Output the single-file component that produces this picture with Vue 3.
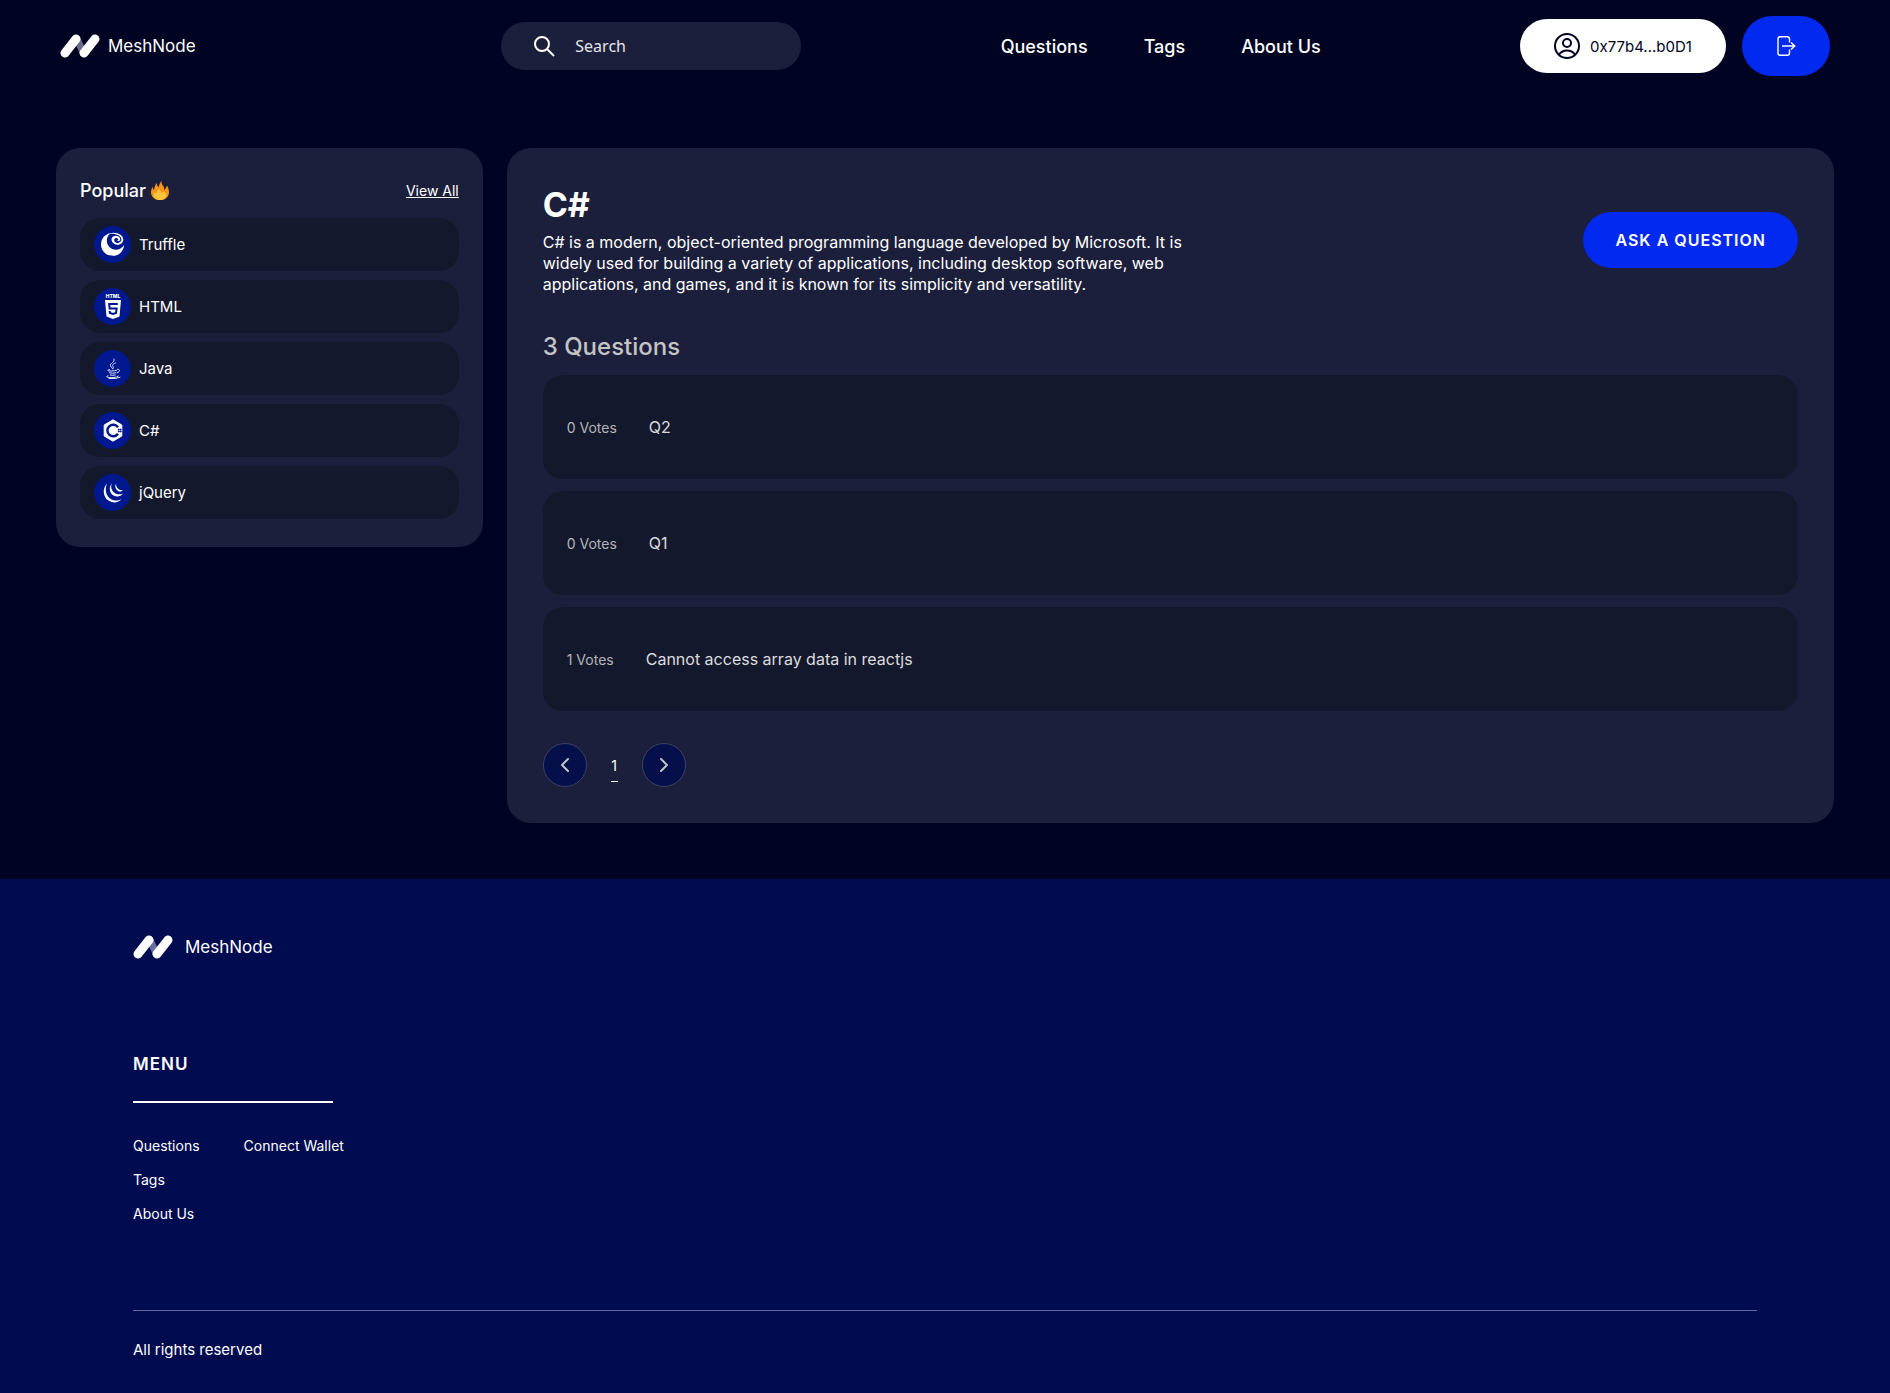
<script setup>
import { ref } from 'vue'

const search = ref('')
const page = ref(1)

const navLinks = ['Questions', 'Tags', 'About Us']
const footerLinks = [
  ['Questions', 'Tags', 'About Us'],
  ['Connect Wallet'],
]

const tags = ref([
  { name: 'Truffle', icon: 'truffle' },
  { name: 'HTML', icon: 'html' },
  { name: 'Java', icon: 'java' },
  { name: 'C#', icon: 'csharp' },
  { name: 'jQuery', icon: 'jquery' },
])

const questions = ref([
  { title: 'Q2', votes: 0 },
  { title: 'Q1', votes: 0 },
  { title: 'Cannot access array data in reactjs', votes: 1 },
])
</script>

<template>
  <div class="page">
    <header class="header">
      <a class="logo" href="#">
        <svg width="40" height="24" viewBox="0 0 40 24" fill="none" stroke-linecap="round">
          <path d="M17 5L23 18" stroke="#6a6b86" stroke-width="7" />
          <path d="M5 19L16 5M24 19L35 5" stroke="#fff" stroke-width="9" />
        </svg>
        <span>MeshNode</span>
      </a>

      <form class="search" role="search" @submit.prevent>
        <svg width="22" height="22" viewBox="0 0 22 22" fill="none" stroke="#fff" stroke-width="2">
          <circle cx="9" cy="9" r="7" />
          <path d="M14 14L21 21" />
        </svg>
        <input v-model="search" type="search" placeholder="Search" aria-label="Search" />
      </form>

      <nav class="nav">
        <a v-for="link in navLinks" :key="link" href="#">{{ link }}</a>
      </nav>

      <div class="account">
        <button class="wallet" type="button">
          <svg width="26" height="26" viewBox="0 0 26 26" fill="none" stroke="#000422" stroke-width="2">
            <circle cx="13" cy="13" r="12" />
            <circle cx="13" cy="10" r="4" />
            <path d="M5 21.500C7 18.800 10 17.500 13 17.500S19 18.800 21 21.500" />
          </svg>
          <span>0x77b4...b0D1</span>
        </button>
        <button class="logout" type="button" aria-label="Log out">
          <svg width="20" height="20" viewBox="0 0 20 20" fill="none" stroke="#fff" stroke-width="1.400">
            <path d="M13.500 6.500V3Q13.500 .8 11.300 .8H4.200Q2 .8 2 3V17Q2 19.200 4.200 19.200H11.300Q13.500 19.200 13.500 17V13.500" />
            <path d="M6 10H18.500M15 6.500L18.800 10L15 13.500" />
          </svg>
        </button>
      </div>
    </header>

    <main class="main">
      <aside class="sidebar">
        <div class="sidebar-head">
          <h2>
            Popular
            <svg width="18" height="19" viewBox="0 0 18 19">
              <path fill="#f7941d" d="M9 19C3.500 19 0 15.500 0 11.500C0 9 .8 7 1.600 5.500C1.700 7 2 8 3 9C3.300 6.500 4 3.500 6 2C5.900 4 6.300 5 7.500 6C8.300 4.500 8.500 2 10.500 0C10.300 2.500 11 4 12.500 5.300C13.300 6.500 13.200 8 13.300 9C14.500 8.200 15.200 6.500 16 4.500C17.400 7 18 9.200 18 11.500C18 15.500 14.500 19 9 19Z" />
              <path fill="#fcc53b" d="M9 19C5 19 2.600 17 2.600 14.500C2.600 13 3.200 12 4 11C4.300 12 4.700 12.400 5.500 12.700C6 10 7 8.500 8.500 7.500C8.700 9.500 10 10.500 11 12C12 11.800 12.500 11 13 10C14.500 11.500 15.400 13 15.400 14.500C15.400 17 13 19 9 19Z" />
            </svg>
          </h2>
          <a href="#">View All</a>
        </div>

        <a v-for="tag in tags" :key="tag.name" class="tag" href="#">
          <span class="tag-icon">
            <svg v-if="tag.icon === 'truffle'" width="25" height="25" viewBox="0 0 25 25">
              <circle cx="12.500" cy="12.500" r="11.500" fill="#fff" />
              <path fill="#00188f" d="M9 2.500C6 6 6 12 10 15.500C14.500 19.500 21 18 24.500 12.500L25 5L20 0L13 .5Z" />
              <path fill="#fff" d="M9.500 1.200C17 -.8 23.500 3 23.300 8C23 12 18.500 13.800 15 12.300C11 10.600 10.300 6 13.500 4.200C16.500 2.700 20.500 4.500 20.200 7.500C20 9.300 17.800 9.500 16.700 8.500C18 8.400 18.500 7.500 17.900 6.700C17 5.500 14.500 6 14.200 7.700C13.900 9.700 16 11.300 18.200 10.900C20.800 10.400 22 8 21 5.800C19.300 2.500 14 1.500 9.500 1.200Z" />
              <path d="M3 20Q7 24.500 13 24" stroke="#00188f" stroke-width=".6" fill="none" />
            </svg>
            <svg v-else-if="tag.icon === 'html'" width="18" height="25" viewBox="0 0 18 25">
              <text x="9" y="4" class="html-word" text-anchor="middle">HTML</text>
              <path fill="#fff" d="M1 6H17L15.500 22.500L9 25L2.500 22.500Z" />
              <path d="M13.800 10H5.200L5.600 14.400H12.600L12.100 18.900L9 20L5.900 18.900L5.700 17" fill="none" stroke="#00188f" stroke-width="2" />
            </svg>
            <svg v-else-if="tag.icon === 'java'" width="16" height="21" viewBox="0 0 16 21" fill="none" stroke="#dfe3ff" stroke-width="1" stroke-linecap="round">
              <path d="M9 1C10.500 4 5 5 5.500 7.500C5.700 8.800 7 9.600 7.500 10.500M10.500 5C7 6.500 7 7.500 8.200 8.800C8.700 9.500 8.300 10.300 7.700 11" />
              <path d="M4.500 11.500C1 12.500 3 13 6.500 13Q9 13 11.500 12.400M4.500 14.800Q7.500 15.800 11 14.800M5.200 17Q7.500 17.800 10.300 17M12.500 11.300C15.500 11 15 14 12.300 14.800" />
              <path d="M3 17.800C-.5 18.800 2.500 19.600 7 19.600Q12 19.600 13.300 18.200M4 20.500Q11 21.200 15 19.300" />
            </svg>
            <svg v-else-if="tag.icon === 'csharp'" width="20" height="23" viewBox="0 0 20 23">
              <path fill="#fff" stroke="#fff" stroke-linejoin="round" d="M10 .8L18.800 6V17L10 22.200L1.200 17V6Z" />
              <path d="M15 8.200A5.800 5.800 0 1 0 15 14.800" fill="none" stroke="#00188f" stroke-width="2.400" />
              <path d="M15.800 9.500V13.500M17.700 9.500V13.500M14.800 10.600H18.700M14.800 12.500H18.700" stroke="#00188f" stroke-width=".8" />
            </svg>
            <svg v-else width="21" height="21" viewBox="-1 0 21 21" fill="#fff">
              <path d="M4 1.500C-1 7 0 15 5.500 18.500C10 21.500 15.500 21 18.500 17C13.500 20 8 18.500 5 14.500C2.200 10.800 2.200 6 4 1.500Z" />
              <path d="M8.800 1.500C5.500 5.500 6.500 11 10.500 13.500C14 15.500 18 14.500 20 11.500C16.500 13 13 12.500 10.500 10C8 7.500 7.600 4.500 8.800 1.500Z" />
              <path d="M13.200 1.500C11.500 4.500 12.500 7.500 15 9C17 10.200 18.500 9.800 20 8C18 8.600 16.500 8 14.900 6.500C13.300 5 12.800 3 13.200 1.500Z" />
            </svg>
          </span>
          {{ tag.name }}
        </a>
      </aside>

      <section class="content">
        <div class="intro">
          <div class="intro-text">
            <h1>C#</h1>
            <p>
              C# is a modern, object-oriented programming language developed by Microsoft. It is
              widely used for building a variety of applications, including desktop software, web
              applications, and games, and it is known for its simplicity and versatility.
            </p>
          </div>
          <button class="ask" type="button">ASK A QUESTION</button>
        </div>

        <h2 class="count">{{ questions.length }} Questions</h2>
        <div class="questions">
          <article v-for="question in questions" :key="question.title" class="question">
            <span class="votes">{{ question.votes }} Votes</span>
            <a href="#">{{ question.title }}</a>
          </article>
        </div>

        <nav class="pagination" aria-label="Pages">
          <button type="button" aria-label="Previous page">
            <svg width="10" height="16" viewBox="0 0 10 16"><path d="M8 2L2 8L8 14" /></svg>
          </button>
          <a href="#" aria-current="page">{{ page }}</a>
          <button type="button" aria-label="Next page">
            <svg width="10" height="16" viewBox="0 0 10 16"><path d="M2 2L8 8L2 14" /></svg>
          </button>
        </nav>
      </section>
    </main>

    <footer class="footer">
      <a class="logo footer-logo" href="#">
        <svg width="40" height="24" viewBox="0 0 40 24" fill="none" stroke-linecap="round">
          <path d="M17 5L23 18" stroke="#6a6fa0" stroke-width="7" />
          <path d="M5 19L16 5M24 19L35 5" stroke="#fff" stroke-width="9" />
        </svg>
        <span>MeshNode</span>
      </a>
      <h3>MENU</h3>
      <div class="footer-menu">
        <ul v-for="(column, index) in footerLinks" :key="index">
          <li v-for="link in column" :key="link"><a href="#">{{ link }}</a></li>
        </ul>
      </div>
      <p class="rights">All rights reserved</p>
    </footer>
  </div>
</template>

<style>
body {
  margin: 0;
  background: #000422;
}
</style>

<style scoped>
.page {
  min-height: 100vh;
  display: flex;
  flex-direction: column;
  background: #000422;
  color: #fff;
  font-family: Inter, "Liberation Sans", sans-serif;
  font-size: 16px;
}
* {
  box-sizing: border-box;
}
h1, h2, h3, p, ul {
  margin: 0;
  padding: 0;
}
a {
  color: inherit;
  text-decoration: none;
}
button {
  border: 0;
  padding: 0;
  font: inherit;
  color: inherit;
  cursor: pointer;
}
svg {
  display: block;
  flex-shrink: 0;
}

.header {
  display: flex;
  justify-content: space-between;
  align-items: center;
  padding: 16px 60px;
}
.logo {
  display: flex;
  align-items: center;
  gap: 8px;
  min-width: 242px;
  font-size: 17px;
  line-height: 24px;
}
.search {
  display: flex;
  align-items: center;
  gap: 20px;
  width: 300px;
  height: 48px;
  padding: 0 32px;
  border-radius: 24px;
  background: #1c1f3b;
}
.search input {
  width: 100%;
  border: 0;
  padding: 0;
  outline: 0;
  background: none;
  color: #fff;
  font-family: "Noto Sans", sans-serif;
  font-size: 16px;
}
.search input::placeholder {
  color: #e4e4e8;
}
.nav {
  display: flex;
  gap: 56px;
  font-size: 18px;
  font-weight: 500;
}
.account {
  display: flex;
  align-items: center;
  gap: 16px;
}
.wallet {
  display: flex;
  align-items: center;
  justify-content: center;
  gap: 10px;
  width: 206px;
  height: 54px;
  border-radius: 27px;
  background: #fff;
  color: #000422;
  font-size: 15px;
}
.logout {
  display: flex;
  align-items: center;
  justify-content: center;
  width: 88px;
  height: 60px;
  border-radius: 30px;
  background: #0229f0;
}

.main {
  display: flex;
  align-items: flex-start;
  gap: 24px;
  padding: 56px;
}
.sidebar {
  flex: 0 0 24%;
  display: flex;
  flex-direction: column;
  gap: 9px;
  padding: 24px 24px 28px;
  border-radius: 24px;
  background: #1c1f3b;
}
.sidebar-head {
  display: flex;
  align-items: center;
  justify-content: space-between;
  height: 37px;
}
.sidebar-head h2 {
  display: flex;
  align-items: center;
  gap: 5px;
  font-size: 18px;
  font-weight: 500;
}
.sidebar-head a {
  font-size: 14px;
  text-decoration: underline;
}
.tag {
  display: flex;
  align-items: center;
  gap: 8px;
  padding: 8px 14px;
  border-radius: 20px;
  background: #14182d;
  font-size: 15px;
}
.tag-icon {
  display: flex;
  align-items: center;
  justify-content: center;
  width: 37px;
  height: 37px;
  border-radius: 50%;
  background: #00188f;
}
.html-word {
  fill: #fff;
  font-size: 5px;
  font-weight: 800;
}

.content {
  flex: 1;
  min-width: 0;
  padding: 36px;
  border-radius: 24px;
  background: #1c1f3b;
}
.intro {
  display: flex;
  align-items: center;
  justify-content: space-between;
  gap: 32px;
}
.intro-text {
  max-width: 656px;
}
.intro h1 {
  font-size: 34px;
  font-weight: 700;
  line-height: 42px;
}
.intro p {
  padding-top: 6px;
  line-height: 21px;
}
.ask {
  flex-shrink: 0;
  padding: 0 32px;
  height: 56px;
  border-radius: 28px;
  background: #0229f0;
  font-weight: 600;
  letter-spacing: 1px;
}
.count {
  margin: 36px 0 12px;
  color: #c4c4c4;
  font-size: 24px;
  font-weight: 500;
  line-height: 32px;
}
.questions {
  display: flex;
  flex-direction: column;
  gap: 12px;
}
.question {
  display: flex;
  align-items: center;
  gap: 32px;
  height: 104px;
  padding: 0 24px;
  border-radius: 20px;
  background: #14182d;
  color: #dcdcde;
}
.votes {
  color: #b4b5b9;
  font-size: 14px;
}
.pagination {
  display: flex;
  align-items: center;
  gap: 24px;
  margin-top: 32px;
}
.pagination button {
  display: flex;
  align-items: center;
  justify-content: center;
  width: 44px;
  height: 44px;
  border: 1px solid #3b4166;
  border-radius: 50%;
  background: #050f4a;
}
.pagination path {
  fill: none;
  stroke: #c4c4c4;
  stroke-width: 2;
  stroke-linecap: round;
  stroke-linejoin: round;
}
.pagination a {
  min-width: 7px;
  padding: 10px 0 7px;
  border-bottom: 1px solid #fff;
  font-size: 14px;
  line-height: 16px;
  text-align: center;
}

.footer {
  flex: 1;
  padding: 56px 133px 34px;
  background: #000b50;
}
.footer-logo {
  gap: 12px;
}
.footer h3 {
  width: 200px;
  margin-top: 92px;
  padding-bottom: 24px;
  border-bottom: 2px solid #fff;
  font-size: 17px;
  font-weight: 600;
  letter-spacing: 1px;
  line-height: 26px;
}
.footer-menu {
  display: flex;
  gap: 44px;
  padding: 26px 0 79px;
  border-bottom: 1px solid #6468a0;
}
.footer ul {
  list-style: none;
  font-size: 14px;
  line-height: 34px;
}
.rights {
  padding-top: 28px;
  font-size: 15px;
  line-height: 21px;
}
</style>
